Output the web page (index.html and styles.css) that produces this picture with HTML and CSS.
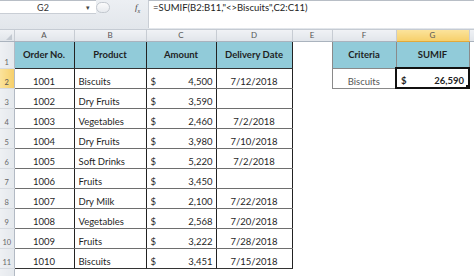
FILE: index.html
```html
<!DOCTYPE html>
<html lang="en">

<head>
    <meta charset="UTF-8">
    <title>SUMIF not equal</title>
    <link rel="stylesheet" href="styles.css">
</head>

<body>
    <div class="excel">
        <!-- formula bar -->
        <div class="formula-bar">
            <div class="name-area">
                <div class="name-box">
                    <span class="cell-ref">G2</span>
                    <span class="arrow">&#9662;</span>
                </div>
            </div>
            <div class="tools">
                <span class="pill"></span>
                <span class="fx">f<sub>x</sub></span>
            </div>
            <div class="formula">=SUMIF(B2:B11,"&lt;&gt;Biscuits",C2:C11)</div>
        </div>

        <!-- sheet grid -->
        <table class="sheet">
            <colgroup>
                <col class="w-rn">
                <col class="w-a">
                <col class="w-b">
                <col class="w-c">
                <col class="w-d">
                <col class="w-e">
                <col class="w-f">
                <col class="w-g">
                <col>
            </colgroup>
            <thead>
                <tr class="col-heads">
                    <th class="corner"><span class="tri"></span></th>
                    <th>A</th>
                    <th>B</th>
                    <th>C</th>
                    <th>D</th>
                    <th>E</th>
                    <th>F</th>
                    <th class="active">G</th>
                    <th class="rest"></th>
                </tr>
            </thead>
            <tbody>
                <tr class="head-row">
                    <td class="rn">1</td>
                    <td class="hd">Order No.</td>
                    <td class="hd">Product</td>
                    <td class="hd">Amount</td>
                    <td class="hd last">Delivery Date</td>
                    <td></td>
                    <td class="hd crit">Criteria</td>
                    <td class="hd crit">SUMIF</td>
                    <td></td>
                </tr>
                <tr>
                    <td class="rn active">2</td>
                    <td class="id">1001</td>
                    <td class="prod">Biscuits</td>
                    <td class="amt"><span>$</span><span>4,500</span></td>
                    <td class="date">7/12/2018</td>
                    <td></td>
                    <td class="crit-val">Biscuits</td>
                    <td class="result"><span>$</span><span>26,590</span></td>
                    <td></td>
                </tr>
                <tr>
                    <td class="rn">3</td>
                    <td class="id">1002</td>
                    <td class="prod">Dry Fruits</td>
                    <td class="amt"><span>$</span><span>3,590</span></td>
                    <td class="date"></td>
                    <td></td><td></td><td></td><td></td>
                </tr>
                <tr>
                    <td class="rn">4</td>
                    <td class="id">1003</td>
                    <td class="prod">Vegetables</td>
                    <td class="amt"><span>$</span><span>2,460</span></td>
                    <td class="date">7/2/2018</td>
                    <td></td><td></td><td></td><td></td>
                </tr>
                <tr>
                    <td class="rn">5</td>
                    <td class="id">1004</td>
                    <td class="prod">Dry Fruits</td>
                    <td class="amt"><span>$</span><span>3,980</span></td>
                    <td class="date">7/10/2018</td>
                    <td></td><td></td><td></td><td></td>
                </tr>
                <tr>
                    <td class="rn">6</td>
                    <td class="id">1005</td>
                    <td class="prod">Soft Drinks</td>
                    <td class="amt"><span>$</span><span>5,220</span></td>
                    <td class="date">7/2/2018</td>
                    <td></td><td></td><td></td><td></td>
                </tr>
                <tr>
                    <td class="rn">7</td>
                    <td class="id">1006</td>
                    <td class="prod">Fruits</td>
                    <td class="amt"><span>$</span><span>3,450</span></td>
                    <td class="date"></td>
                    <td></td><td></td><td></td><td></td>
                </tr>
                <tr>
                    <td class="rn">8</td>
                    <td class="id">1007</td>
                    <td class="prod">Dry Milk</td>
                    <td class="amt"><span>$</span><span>2,100</span></td>
                    <td class="date">7/22/2018</td>
                    <td></td><td></td><td></td><td></td>
                </tr>
                <tr>
                    <td class="rn">9</td>
                    <td class="id">1008</td>
                    <td class="prod">Vegetables</td>
                    <td class="amt"><span>$</span><span>2,568</span></td>
                    <td class="date">7/20/2018</td>
                    <td></td><td></td><td></td><td></td>
                </tr>
                <tr>
                    <td class="rn">10</td>
                    <td class="id">1009</td>
                    <td class="prod">Fruits</td>
                    <td class="amt"><span>$</span><span>3,222</span></td>
                    <td class="date">7/28/2018</td>
                    <td></td><td></td><td></td><td></td>
                </tr>
                <tr class="last-row">
                    <td class="rn">11</td>
                    <td class="id">1010</td>
                    <td class="prod">Biscuits</td>
                    <td class="amt"><span>$</span><span>3,451</span></td>
                    <td class="date">7/15/2018</td>
                    <td></td><td></td><td></td><td></td>
                </tr>
                <tr class="row-12">
                    <td class="rn">12</td>
                    <td></td><td></td><td></td><td></td><td></td><td></td><td></td><td></td>
                </tr>
            </tbody>
        </table>
    </div>
</body>

</html>
```

FILE: styles.css
```css
* {
    box-sizing: border-box;
}

body {
    margin: 0;
    background: #fff;
    font-family: Lato, "Liberation Sans", sans-serif;
    color: #1f1f1f;
    overflow: hidden;
}

.excel {
    width: 474px;
    height: 276px;
    overflow: hidden;
}

/* formula bar */
.formula-bar {
    display: flex;
    height: 30px;
    background: linear-gradient(#eceff3, #e2e6eb);
    border-bottom: 1px solid #c5cbd3;
}

.name-area {
    width: 96px;
}

.name-box {
    display: flex;
    align-items: center;
    height: 14px;
    background: #fff;
    border-top: 1px solid #b8bec6;
    border-bottom: 1px solid #c9ced5;
    font-size: 9px;
    color: #333;
}

.cell-ref {
    width: 86px;
    text-align: center;
}

.arrow {
    font-size: 7px;
    color: #444;
}

.tools {
    display: flex;
    align-items: flex-start;
    width: 52px;
    padding-top: 2px;
}

.pill {
    width: 14px;
    height: 11px;
    border: 1px solid #c3c8cf;
    border-radius: 6px;
    background: linear-gradient(#fbfbfc, #e7eaee);
}

.fx {
    margin-left: 25px;
    font-family: "Liberation Serif", serif;
    font-style: italic;
    font-size: 9px;
    color: #444;
    line-height: 11px;
}

.fx sub {
    font-size: 6px;
}

.formula {
    flex: 1;
    height: 28px;
    background: #fff;
    border-top: 1px solid #b8bec6;
    border-left: 1px solid #c9ced5;
    padding: 1px 0 0 4px;
    font-size: 9.5px;
    color: #222;
}

/* grid */
.sheet {
    table-layout: fixed;
    border-collapse: collapse;
    width: 474px;
    font-size: 9.5px;
}

.w-rn { width: 14px; }
.w-a { width: 60px; }
.w-b { width: 72px; }
.w-c { width: 70px; }
.w-d { width: 76px; }
.w-e { width: 40px; }
.w-f { width: 64px; }
.w-g { width: 73px; }

.sheet td,
.sheet th {
    padding: 0;
    white-space: nowrap;
    overflow: hidden;
}

.col-heads th {
    height: 11px;
    font-weight: normal;
    font-size: 8px;
    color: #555;
    background: linear-gradient(#f0f2f5, #e1e5ea);
    border-right: 1px solid #c7ccd3;
    border-bottom: 1px solid #aab3be;
    line-height: 10px;
}

.col-heads th.active {
    background: linear-gradient(#fbe39c, #f6cf6a);
    border-bottom-color: #e2a93b;
    color: #555;
}

.col-heads th.rest {
    border-right: none;
}

.corner {
    position: relative;
}

.tri {
    position: absolute;
    right: 2px;
    bottom: 1px;
    border-left: 6px solid transparent;
    border-bottom: 6px solid #c3c9d1;
}

.sheet tbody td {
    height: 20px;
    vertical-align: bottom;
    padding-bottom: 1px;
}

.sheet .head-row td {
    height: 27px;
}

.sheet td.rn {
    background: linear-gradient(90deg, #eef0f3, #e4e8ec);
    border-right: 1px solid #b3bac4;
    border-bottom: 1px solid #d6dae0;
    font-size: 7.5px;
    color: #666;
    text-align: center;
}

.sheet td.rn.active {
    background: linear-gradient(90deg, #fbe39c, #f6cf6a);
    color: #555;
}

.sheet td.hd {
    background: #91cbd9;
    font-weight: bold;
    text-align: center;
    vertical-align: middle;
    padding-bottom: 0;
    border-right: 1px solid #222;
    border-bottom: 1px solid #333;
}

.sheet td.hd.crit {
    border: 1px solid #8a8a8a;
}

/* main table body */
.id,
.prod,
.amt,
.date {
    border-right: 1px solid #222;
    border-bottom: 1px solid #6e6e6e;
}

.last-row td.id,
.last-row td.prod,
.last-row td.amt,
.last-row td.date {
    border-bottom-color: #333;
}

.id,
.date {
    text-align: center;
}

.sheet td.prod {
    padding-left: 4px;
}

.amt span,
.result span {
    display: inline-block;
}

.amt span:first-child,
.result span:first-child {
    width: 20px;
    padding-left: 4px;
}

.amt span:last-child {
    width: 46px;
    text-align: right;
}

.crit-val {
    text-align: center;
    color: #555;
    border: 1px solid #8a8a8a;
}

.sheet td.result {
    position: relative;
    border: 2px solid #111;
    font-weight: bold;
}

.result span:last-child {
    width: 47px;
    text-align: right;
}

/* fill handle */
.result::after {
    content: "";
    position: absolute;
    right: -3px;
    bottom: -3px;
    width: 4px;
    height: 4px;
    background: #111;
    border: 1px solid #fff;
}
```
